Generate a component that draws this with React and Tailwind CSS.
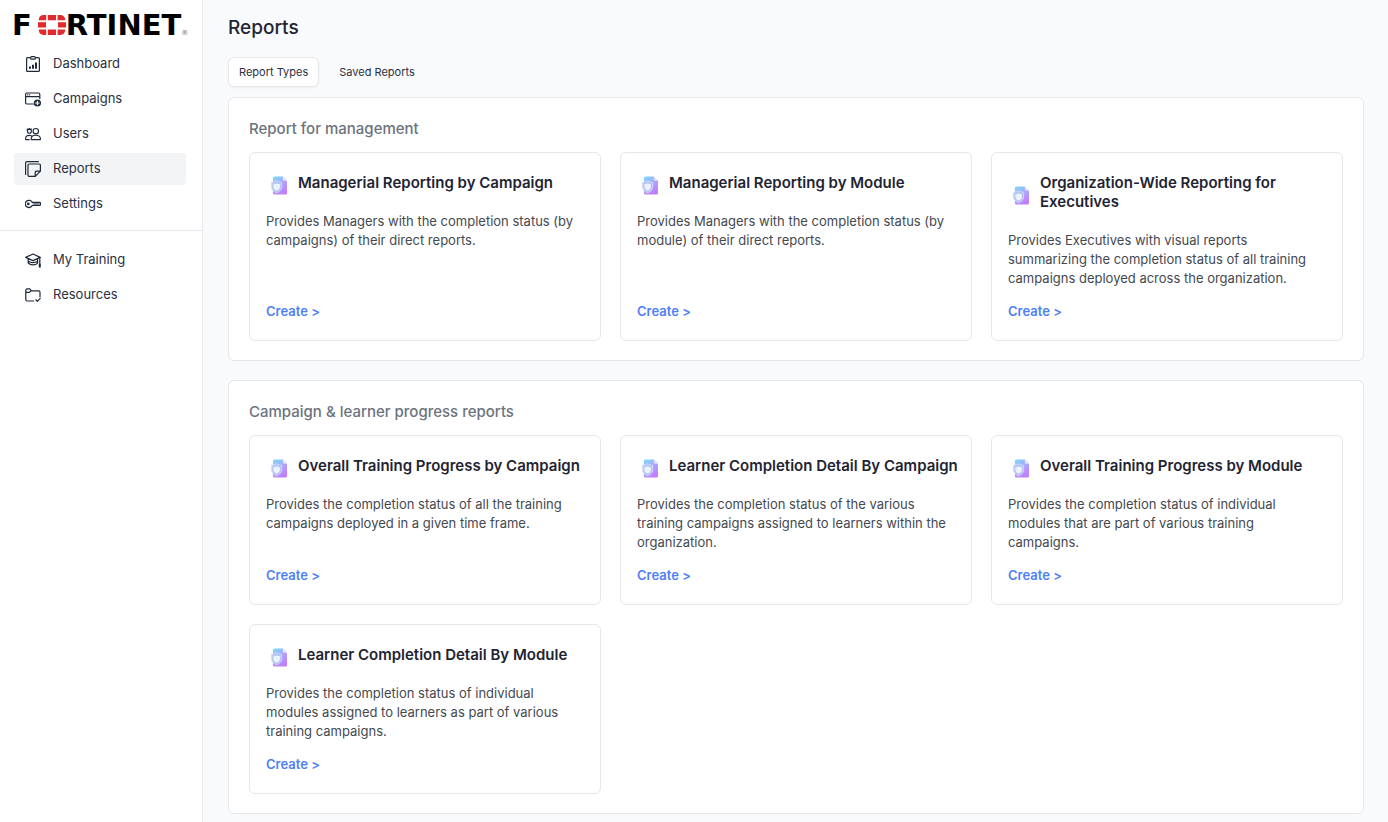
const stroke = {
  viewBox: '0 0 16 16',
  fill: 'none',
  stroke: 'currentColor',
  strokeWidth: 1.2,
  strokeLinecap: 'round',
  strokeLinejoin: 'round',
  className: 'size-4 shrink-0 text-gray-800',
  'aria-hidden': true,
};

const DashboardIcon = () => (
  <svg {...stroke}>
    <path d="M4.600 1.700H2.600a1 1 0 0 0-1 1v11.700a1 1 0 0 0 1 1h10.800a1 1 0 0 0 1-1V2.700a1 1 0 0 0-1-1h-2" />
    <rect x="5.600" y="0.600" width="4.800" height="2.600" rx="1" />
    <path d="M5 12.800v-2.400M8 12.800V8.800M11 12.800V6.400" strokeWidth="2" strokeLinecap="butt" />
  </svg>
);

const CampaignsIcon = () => (
  <svg {...stroke}>
    <path d="M8.400 13H1.800a1.200 1.200 0 0 1-1.200-1.200V3.200A1.200 1.200 0 0 1 1.800 2h11.800a1.200 1.200 0 0 1 1.200 1.200v4.400M.6 5.600h14.200M2.600 3.800h.2M4.400 3.800h.2" />
    <circle cx="12.400" cy="12" r="3.600" fill="currentColor" stroke="none" />
    <path d="M12.400 10.200v3.600M10.600 12h3.600" stroke="white" strokeWidth="1.100" />
  </svg>
);

const UsersIcon = () => (
  <svg {...stroke} strokeWidth="1.100">
    <circle cx="4.400" cy="5.200" r="2" />
    <circle cx="10.800" cy="5.200" r="2.700" />
    <path d="M2.400 4.600l-.2-1.600 1.200.6 1-1.200 1 1.200 1.200-.6" />
    <path d="M6.200 13.600v-.8c0-2.200 1.800-3.600 4.600-3.600s4.600 1.400 4.600 3.600v.8zM4.200 13.600H.6v-1.200c0-1.800 1.400-3 3.800-3 .8 0 1.400.1 1.900.4" />
  </svg>
);

const ReportsIcon = () => (
  <svg {...stroke}>
    <path d="M.6 13.400V1.800A1.200 1.200 0 0 1 1.800.6h11.600" />
    <path d="M10.200 15.400H4.200A1.200 1.200 0 0 1 3 14.200V4.200A1.200 1.200 0 0 1 4.200 3h10a1.200 1.200 0 0 1 1.200 1.200v6zM10.200 15.400v-4a1.200 1.200 0 0 1 1.200-1.200h4" />
  </svg>
);

const SettingsIcon = () => (
  <svg {...stroke} strokeWidth="1.300">
    <path d="M7.400 6.500A3.700 3.600 0 1 0 7.400 9.300h7.200a.8.800 0 0 0 .8-.8v-1.200a.8.800 0 0 0-.8-.8z" />
    <circle cx="3.300" cy="7.900" r=".7" />
    <path d="M9 8h4.400" strokeWidth=".8" />
  </svg>
);

const TrainingIcon = () => (
  <svg {...stroke}>
    <path d="M.6 5.400 8 2l7.200 3.400L8 8.600zM3.200 7v4c1.200 1.300 2.800 1.900 4.800 1.900s3.600-.6 4.600-1.700V7M3.400 9.200c2.600 1.800 6.600 1.800 9 0" />
    <path d="M14.800 5.600v6.400" />
    <path d="M14.800 12.400v2.400" strokeWidth="2" />
  </svg>
);

const ResourcesIcon = () => (
  <svg {...stroke}>
    <path d="M8.600 14H2.200a1.400 1.400 0 0 1-1.400-1.400V3.200A1.400 1.400 0 0 1 2.200 1.800h2.600l1.600 2h7.200A1.400 1.400 0 0 1 15 5.200v4.600M.8 5.400h3.600l1.800-1.600" />
    <path d="M10.800 12.800l1.600 1.500 2.800-2.900" />
  </svg>
);

const LogoMark = () => (
  <svg viewBox="0 0 28 20" className="ml-1.5 h-5 w-7 shrink-0 fill-[#e02a2d]" aria-hidden="true">
    <path d="M5 0h3.200v5.200H.8V4.500Q1 .8 5 0zM9.800 0h8.200v5.200H9.800zM19.600 0h3.200q4 .8 4.400 4.500v.7h-7.600z" />
    <path d="M0 7.200h8v5.400H0zM20 7.200h8v5.400h-8z" />
    <path d="M.8 14.600h7.400V20H5Q1 19.200.8 15.300zM9.800 14.600h8.200V20H9.800zM19.600 14.600h7.600v.7q-.4 3.900-4.400 4.700h-3.200z" />
  </svg>
);

const ReportIcon = () => (
  <svg viewBox="0 0 18 20" className="mt-[3px] -mb-[3px] ml-1 h-[19px] w-[18px] shrink-0" aria-hidden="true">
    <defs>
      <linearGradient id="page-fill" x1="0.200" y1="0" x2="0.700" y2="1">
        <stop offset="0" stopColor="#7fd6fb" />
        <stop offset="0.500" stopColor="#b0a0fb" />
        <stop offset="1" stopColor="#c27bfb" />
      </linearGradient>
    </defs>
    <path d="M4.200.6h8.800L17.400 5v12.800a1.600 1.600 0 0 1-1.600 1.600H4.200a1.600 1.600 0 0 1-1.600-1.600V2.200A1.600 1.600 0 0 1 4.200.6z" fill="url(#page-fill)" />
    <path d="M13 .6 17.400 5H14.200A1.200 1.200 0 0 1 13 3.800z" fill="#e4e2fd" />
    <path d="M6.600 5c1.600 1.100 3.400 1.500 5.200 1.600v4.800c0 2.900-2 4.900-5.200 6.200-3.200-1.300-5.600-3.300-5.600-6.200V6.600C3 6.500 5 6.100 6.600 5z" fill="#b4c4f2" fillOpacity=".9" stroke="#d3e0fa" strokeWidth=".9" />
    <path d="M6.600 7.600c1 .7 2.100 1 3.300 1.100v2.800c0 1.800-1.300 3.100-3.300 4-2-.9-3.500-2.200-3.500-4V8.700c1.200-.1 2.500-.4 3.500-1.100z" fill="#eef2fb" />
  </svg>
);

const primaryNav = [
  { label: 'Dashboard', Icon: DashboardIcon },
  { label: 'Campaigns', Icon: CampaignsIcon },
  { label: 'Users', Icon: UsersIcon },
  { label: 'Reports', Icon: ReportsIcon, active: true },
  { label: 'Settings', Icon: SettingsIcon },
];

const secondaryNav = [
  { label: 'My Training', Icon: TrainingIcon },
  { label: 'Resources', Icon: ResourcesIcon },
];

const sections = [
  {
    title: 'Report for management',
    cards: [
      {
        title: 'Managerial Reporting by Campaign',
        text: 'Provides Managers with the completion status (by campaigns) of their direct reports.',
      },
      {
        title: 'Managerial Reporting by Module',
        text: 'Provides Managers with the completion status (by module) of their direct reports.',
      },
      {
        title: 'Organization-Wide Reporting for Executives',
        text: 'Provides Executives with visual reports summarizing the completion status of all training campaigns deployed across the organization.',
      },
    ],
  },
  {
    title: 'Campaign & learner progress reports',
    cards: [
      {
        title: 'Overall Training Progress by Campaign',
        text: 'Provides the completion status of all the training campaigns deployed in a given time frame.',
      },
      {
        title: 'Learner Completion Detail By Campaign',
        text: 'Provides the completion status of the various training campaigns assigned to learners within the organization.',
      },
      {
        title: 'Overall Training Progress by Module',
        text: 'Provides the completion status of individual modules that are part of various training campaigns.',
      },
      {
        title: 'Learner Completion Detail By Module',
        text: 'Provides the completion status of individual modules assigned to learners as part of various training campaigns.',
      },
    ],
  },
];

function NavList({ items }) {
  return (
    <ul className="flex flex-col gap-[3px] pr-4 pl-3.5">
      {items.map(({ label, Icon, active }) => (
        <li key={label}>
          <a
            href="#"
            aria-current={active ? 'page' : undefined}
            className={
              active
                ? 'flex h-8 items-center gap-3 rounded-sm bg-gray-100 px-[11px]'
                : 'flex h-8 items-center gap-3 rounded-sm px-[11px]'
            }
          >
            <Icon />
            {label}
          </a>
        </li>
      ))}
    </ul>
  );
}

function ReportCard({ title, text }) {
  return (
    <article className="flex flex-col rounded-md border border-gray-200 bg-white pt-5 pr-3 pb-[19px] pl-4">
      <div className="flex items-center gap-2.5">
        <ReportIcon />
        <h3 className="text-[15px] leading-[19px] font-semibold text-[#1f2433]">{title}</h3>
      </div>
      <p className="mt-5 mb-[13px] pr-2 text-[13px] leading-[19px] text-[#444950]">{text}</p>
      <a href="#" className="mt-auto self-start text-[13px] leading-5 font-semibold text-[#4f80f5]">
        Create &gt;
      </a>
    </article>
  );
}

export default function App() {
  return (
    <div className="flex min-h-screen bg-[#f9fafc] font-['Inter',sans-serif] text-[#2a3042]">
      <aside className="w-[203px] shrink-0 border-r border-gray-200 bg-white text-[13px]">
        <a
          href="#"
          aria-label="Fortinet"
          className="flex h-12 items-baseline pt-[11px] pl-3 font-['DejaVu_Sans',sans-serif] text-[29px] leading-none font-bold text-black"
        >
          F
          <LogoMark />
          RTINET
          <span className="text-[7px] font-normal text-gray-500">®</span>
        </a>
        <nav aria-label="Main">
          <NavList items={primaryNav} />
          <hr className="mt-2.5 mb-[13px] border-gray-200" />
          <NavList items={secondaryNav} />
        </nav>
      </aside>

      <main className="min-w-0 flex-1 pt-3.5 pr-6 pb-[7px] pl-[25px]">
        <h1 className="text-[19px] leading-7 font-medium text-[#1f2433]">Reports</h1>
        <div className="mt-[15px] mb-2.5 flex gap-2.5" role="tablist">
          <button
            type="button"
            role="tab"
            aria-selected="true"
            className="h-[30px] rounded-md border border-gray-200 bg-white px-2.5 text-[11px] shadow-xs"
          >
            Report Types
          </button>
          <button type="button" role="tab" aria-selected="false" className="h-[30px] px-2.5 text-[11px]">
            Saved Reports
          </button>
        </div>
        <div className="flex flex-col gap-[19px]">
          {sections.map((section) => (
            <section key={section.title} className="rounded-md border border-gray-200 bg-white px-5 pt-[21px] pb-[19px]">
              <h2 className="mb-[13px] text-[15px] leading-5 font-medium text-[#6c737d]">{section.title}</h2>
              <div className="grid grid-cols-3 gap-[19px]">
                {section.cards.map((card) => (
                  <ReportCard key={card.title} {...card} />
                ))}
              </div>
            </section>
          ))}
        </div>
      </main>
    </div>
  );
}
